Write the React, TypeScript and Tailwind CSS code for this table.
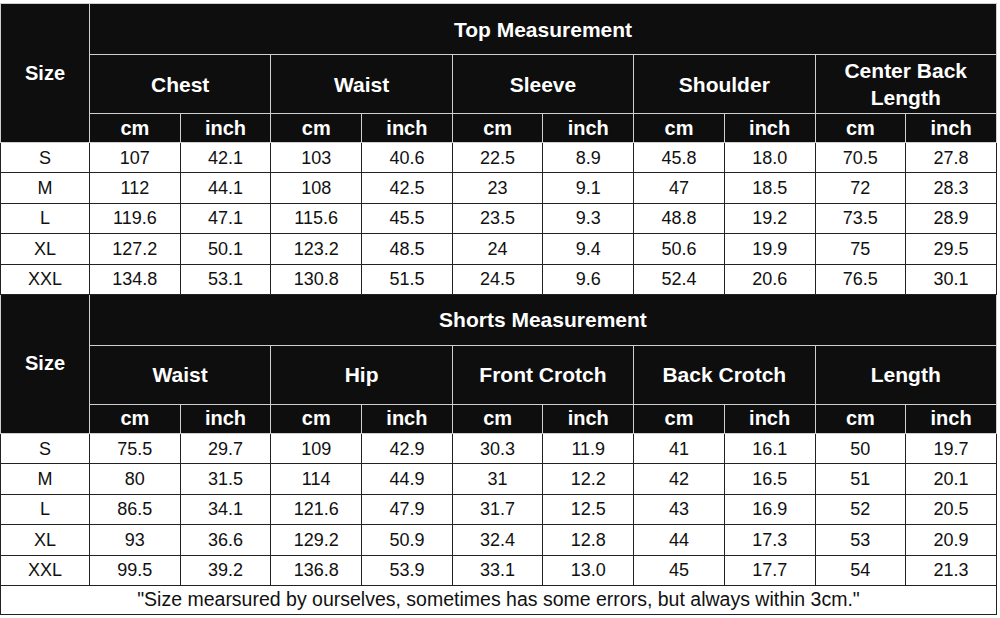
const topGroups = ["Chest", "Waist", "Sleeve", "Shoulder", "Center Back Length"];
const shortsGroups = ["Waist", "Hip", "Front Crotch", "Back Crotch", "Length"];

const topRows = [
  ["S", "107", "42.1", "103", "40.6", "22.5", "8.9", "45.8", "18.0", "70.5", "27.8"],
  ["M", "112", "44.1", "108", "42.5", "23", "9.1", "47", "18.5", "72", "28.3"],
  ["L", "119.6", "47.1", "115.6", "45.5", "23.5", "9.3", "48.8", "19.2", "73.5", "28.9"],
  ["XL", "127.2", "50.1", "123.2", "48.5", "24", "9.4", "50.6", "19.9", "75", "29.5"],
  ["XXL", "134.8", "53.1", "130.8", "51.5", "24.5", "9.6", "52.4", "20.6", "76.5", "30.1"],
];

const shortsRows = [
  ["S", "75.5", "29.7", "109", "42.9", "30.3", "11.9", "41", "16.1", "50", "19.7"],
  ["M", "80", "31.5", "114", "44.9", "31", "12.2", "42", "16.5", "51", "20.1"],
  ["L", "86.5", "34.1", "121.6", "47.9", "31.7", "12.5", "43", "16.9", "52", "20.5"],
  ["XL", "93", "36.6", "129.2", "50.9", "32.4", "12.8", "44", "17.3", "53", "20.9"],
  ["XXL", "99.5", "39.2", "136.8", "53.9", "33.1", "13.0", "45", "17.7", "54", "21.3"],
];

const head = "bg-[#0e0e0e] text-white font-bold leading-[27px] border border-[#cfcfcf] p-0 text-center align-middle";
const cell = "bg-white text-[#111] leading-none border border-[#222] p-0 text-center align-middle";

function Section({ title, groups, rows }: { title: string; groups: string[]; rows: string[][] }) {
  return (
    <>
      <tr className="h-[51px]">
        <th rowSpan={3} className={head + " text-[20px]"}>Size</th>
        <th colSpan={10} className={head + " text-[21px]"}>{title}</th>
      </tr>
      <tr className="h-[59px]">
        {groups.map((g) => (
          <th key={g} colSpan={2} className={head + " text-[21px]"}>
            {g === "Center Back Length" ? (
              <>
                Center Back
                <br />
                Length
              </>
            ) : (
              g
            )}
          </th>
        ))}
      </tr>
      <tr className="h-[29px]">
        {groups.map((g) => (
          <>
            <th key={g + "cm"} className={head + " text-[20px]"}>cm</th>
            <th key={g + "in"} className={head + " text-[20px]"}>inch</th>
          </>
        ))}
      </tr>
      {rows.map((r) => (
        <tr key={r[0]} className="h-[30.4px]">
          {r.map((v, i) => (
            <td key={i} className={cell + " text-[18px]"}>{v}</td>
          ))}
        </tr>
      ))}
    </>
  );
}

export default function App() {
  return (
    <div className="w-[1000px] h-[618px] bg-white pt-[3px] overflow-hidden" style={{ fontFamily: '"Liberation Sans", Arial, sans-serif' }}>
      <table className="w-[996px] table-fixed border-collapse">
        <colgroup>
          <col className="w-[89px]" />
          {Array.from({ length: 10 }).map((_, i) => (
            <col key={i} className="w-[90.7px]" />
          ))}
        </colgroup>
        <tbody>
          <Section title="Top Measurement" groups={topGroups} rows={topRows} />
          <Section title="Shorts Measurement" groups={shortsGroups} rows={shortsRows} />
          <tr className="h-[29px]">
            <td colSpan={11} className={cell + " text-[19.5px]"}>
              "Size mearsured by ourselves, sometimes has some errors, but always within 3cm."
            </td>
          </tr>
        </tbody>
      </table>
    </div>
  );
}
